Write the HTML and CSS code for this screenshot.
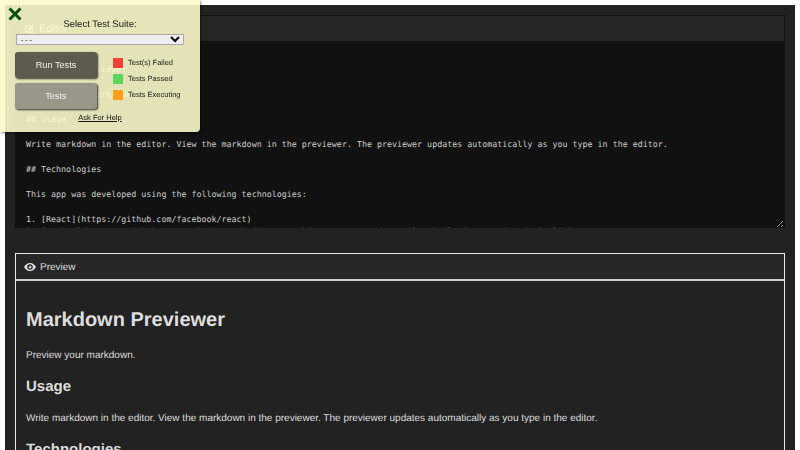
FILE: index.html
```html
<!DOCTYPE html>
<html lang="en">
<head>
<meta charset="utf-8">
<title>Markdown Previewer</title>
<link rel="stylesheet" href="styles.css">
</head>
<body>
<main class="page">
  <section class="editor-wrap">
    <div class="titlebar editor-bar">
      <svg class="icon" viewBox="0 0 16 16"><path d="M2 3h7l-1.500 1.500H3.500v8h8V9L13 7.500V14H2zM6 8.500 12.500 2 14.500 4 8 10.500H6z"/></svg>
      <span>Editor</span>
    </div>
    <textarea class="editor" spellcheck="false" readonly># Markdown Previewer

Preview your markdown.

## Usage

Write markdown in the editor. View the markdown in the previewer. The previewer updates automatically as you type in the editor.

## Technologies

This app was developed using the following technologies:

1. [React](https://github.com/facebook/react)
2. [Marked](https://github.com/markedjs/marked) - a markdown parser and compiler built for speed and simplicity</textarea>
  </section>
  <section class="preview-wrap">
    <div class="titlebar preview-bar">
      <svg class="icon eye" viewBox="0 0 16 16"><path fill-rule="evenodd" d="M8 2.500c3.600 0 6.400 2.600 8 5.500-1.600 2.900-4.400 5.500-8 5.500S1.600 10.900 0 8c1.600-2.900 4.400-5.500 8-5.500zm0 1.800a3.700 3.700 0 1 0 0 7.400 3.700 3.700 0 0 0 0-7.400zM8 6a2 2 0 1 1-2 2c.7.300 2-.8 2-2z"/></svg>
      <span>Preview</span>
    </div>
    <article class="preview">
      <h1>Markdown Previewer</h1>
      <p>Preview your markdown.</p>
      <h2>Usage</h2>
      <p>Write markdown in the editor. View the markdown in the previewer. The previewer updates automatically as you type in the editor.</p>
      <h2>Technologies</h2>
    </article>
  </section>
</main>
<aside class="tests">
  <svg class="close" viewBox="0 0 14 14"><path d="M1.500 1.500 12.500 12.500M12.500 1.500 1.500 12.500"/></svg>
  <div class="suite-label">Select Test Suite:</div>
  <select class="suite"><option>- - -</option></select>
  <div class="tests-row">
    <div class="buttons">
      <button class="btn run">Run Tests</button>
      <button class="btn list">Tests</button>
    </div>
    <ul class="legend">
      <li><i class="swatch failed"></i>Test(s) Failed</li>
      <li><i class="swatch passed"></i>Tests Passed</li>
      <li><i class="swatch running"></i>Tests Executing</li>
    </ul>
  </div>
  <a class="help" href="#">Ask For Help</a>
</aside>
</body>
</html>
```
FILE: styles.css
```css
* { box-sizing: border-box; }
html, body { margin: 0; height: 100%; overflow: hidden; background: #fff; }
body { font-family: "Liberation Sans", Arial, sans-serif; padding-top: 5px; text-rendering: geometricPrecision; }
.page { background: #222; margin: 0 5px; height: 445px; padding: 10px 10px 0; overflow: hidden; }
.titlebar { display: flex; align-items: center; gap: 4px; padding-left: 8px; font-size: 10px; color: #ddd; background: #262626; }
.editor-bar { height: 25px; font-size: 11px; }
.editor-wrap { border: 1px solid #111; border-bottom: 0; }
.icon { width: 11px; height: 11px; fill: #ddd; flex: none; }
.eye { width: 12px; height: 12px; }
.editor { display: block; width: 100%; height: 187px; background: #111; color: #ccc; border: 0; outline: 0; padding: 21.500px 10px 0; margin: 0; font: 8.330px/12.500px "DejaVu Sans Mono", monospace; resize: both; white-space: pre-wrap; overflow: hidden; text-rendering: geometricPrecision; }
.preview-wrap { margin-top: 25px; border: 1px solid #e8e8e8; }
.preview-bar { height: 27px; padding-top: 1px; border-bottom: 2px solid #ccc; }
.preview { background: #222; color: #ddd; padding: 1px 10px; font-size: 10px; }
.preview h1 { font-size: 20px; margin: 0; padding-top: 26px; line-height: 24px; }
.preview p { margin: 17px 0 0; line-height: 14px; }
.preview h2 { font-size: 15px; line-height: 18px; margin: 15px 0 0; }
.preview h2 + p { margin-top: 16px; }
.tests { position: fixed; left: 0; top: 0; width: 200px; height: 132px; background: rgba(251, 251, 202, 0.9); border-radius: 0 0 4px 0; box-shadow: 1px 1px 3px rgba(0, 0, 0, 0.5); padding: 18px 16px 0; color: #222; font-size: 9.500px; display: flex; flex-direction: column; }
.close { position: absolute; left: 8px; top: 7px; width: 14px; height: 14px; fill: none; stroke: #064f06; stroke-width: 3; }
.suite-label { text-align: center; line-height: 13px; }
.suite { width: 168px; height: 11px; margin-top: 3px; font-size: 7px; padding: 0; background: #eee; border: 1px solid #aaa; }
.tests-row { display: flex; margin: 7px 0 0 -1px; gap: 16px; }
.buttons { display: flex; flex-direction: column; gap: 5px; }
.btn { width: 82px; height: 26px; border: 0; border-radius: 3px; font: 9.200px "Liberation Sans", Arial, sans-serif; color: #eee; box-shadow: 1px 1px 2px #333; }
.run { background: #5c5b4e; }
.list { background: #98978a; }
.legend { list-style: none; margin: 5px 0 0; padding: 0; font-size: 7.500px; display: flex; flex-direction: column; gap: 5px; white-space: nowrap; }
.legend li { display: flex; align-items: center; gap: 5px; height: 11px; }
.swatch { display: block; width: 10px; height: 10px; flex: none; }
.failed { background: #f44336; }
.passed { background: #5cd65c; }
.running { background: #ff9e1a; }
.help { align-self: center; margin-top: 4px; font-size: 7.500px; color: #111; }
```
